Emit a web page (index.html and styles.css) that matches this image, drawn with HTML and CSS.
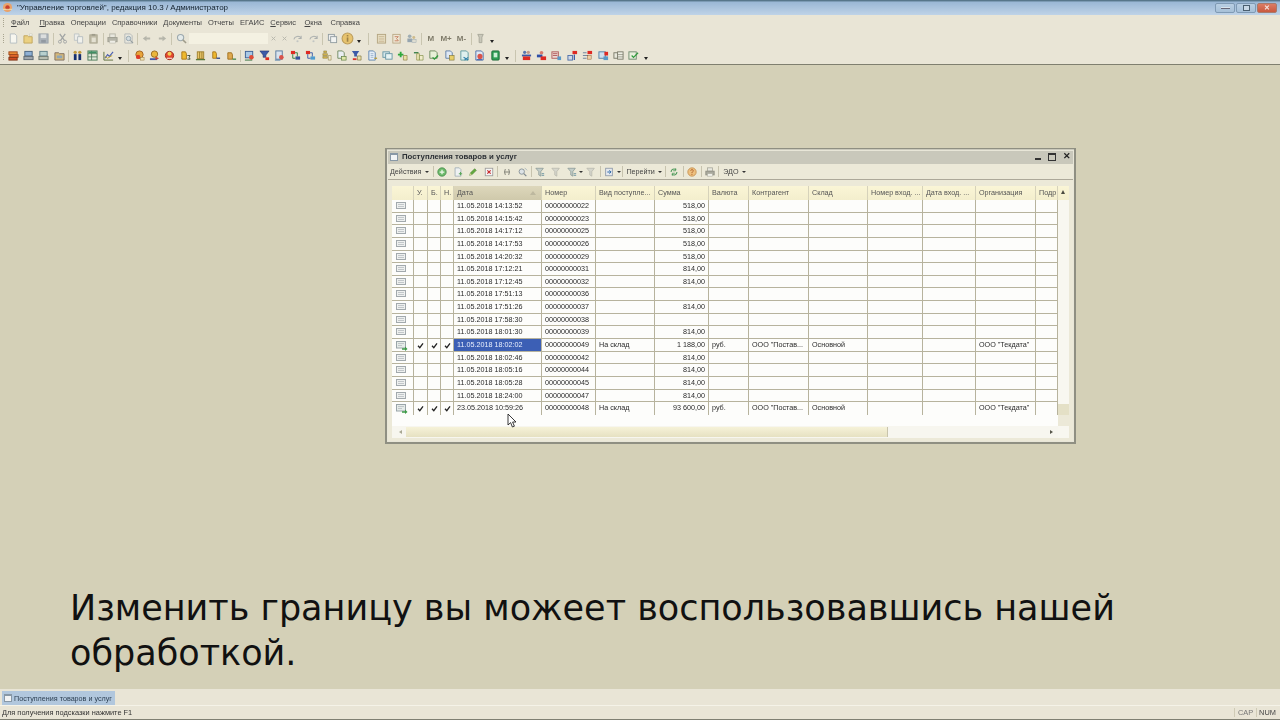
FILE: index.html
```html
<!DOCTYPE html>
<html lang="ru">
<head>
<meta charset="utf-8">
<title>Управление торговлей</title>
<link rel="stylesheet" href="styles.css">
</head>
<body>
<svg class="defs" width="0" height="0">
  <symbol id="doc" viewBox="0 0 12 12"><path d="M2.5 1h5l2 2v8h-7z" fill="#fbfbf6" stroke="#a9b4bd"/></symbol>
  <symbol id="open" viewBox="0 0 12 12"><path d="M1 3h4l1 1h4v7H1z" fill="#eccb6c" stroke="#b8963e"/><path d="M7 1h3v2H7z" fill="#fff" stroke="#b9b9a8" stroke-width=".6"/></symbol>
  <symbol id="save" viewBox="0 0 12 12"><rect x="1" y="1" width="10" height="10" fill="#9fa9b4" stroke="#8a93a0"/><rect x="3" y="1.5" width="6" height="4" fill="#d9dde0"/><rect x="3.5" y="7.5" width="5" height="3" fill="#7d8794"/></symbol>
  <symbol id="cut" viewBox="0 0 12 12"><path d="M3 1l5 7M9 1L4 8" stroke="#8f9498" stroke-width="1.4" fill="none"/><circle cx="3.2" cy="9.5" r="1.6" fill="none" stroke="#8f9498"/><circle cx="8.8" cy="9.5" r="1.6" fill="none" stroke="#8f9498"/></symbol>
  <symbol id="copy" viewBox="0 0 12 12"><path d="M1.5 1h5v7h-5z" fill="#eef0ee" stroke="#b4bcc2"/><path d="M5 4h5.500v7H5z" fill="#f4f5f2" stroke="#a8b2bb"/></symbol>
  <symbol id="paste" viewBox="0 0 12 12"><rect x="2" y="2" width="8" height="9" fill="#b5b09a" stroke="#99957f"/><rect x="4" y="1" width="4" height="2" fill="#8d8a78"/><rect x="4" y="5" width="4.500" height="5" fill="#e3e1d2"/></symbol>
  <symbol id="print" viewBox="0 0 12 12"><rect x="3" y="1" width="6" height="4" fill="#e8e8e0" stroke="#a9a99c"/><rect x="1" y="5" width="10" height="4.500" fill="#a9a99e" stroke="#8d8d80"/><rect x="3" y="8" width="6" height="3" fill="#f0f0ea" stroke="#a9a99c" stroke-width=".6"/></symbol>
  <symbol id="prev" viewBox="0 0 12 12"><path d="M2 1h6l2 2v8H2z" fill="#e8e8e0" stroke="#a7adb0"/><circle cx="6" cy="6" r="2.400" fill="#cfdbe2" stroke="#7f95a5"/><path d="M8 8l3 3" stroke="#7f8a90" stroke-width="1.200"/></symbol>
  <symbol id="undo" viewBox="0 0 12 12"><path d="M2 6l4-3v2h4v2H6v2z" fill="#a9aaa0"/></symbol>
  <symbol id="redo" viewBox="0 0 12 12"><path d="M10 6L6 3v2H2v2h4v2z" fill="#a9aaa0"/></symbol>
  <symbol id="find" viewBox="0 0 12 12"><circle cx="5" cy="5" r="3.400" fill="#e3ecef" stroke="#8b9ba5" stroke-width="1.200"/><path d="M7.500 7.500l3.500 3.500" stroke="#8d8a78" stroke-width="1.600"/></symbol>
  <symbol id="x" viewBox="0 0 12 12"><path d="M3.500 3.500l5 5M8.500 3.500l-5 5" stroke="#a9aaa0" stroke-width="1.200"/></symbol>
  <symbol id="rot" viewBox="0 0 12 12"><path d="M2 7a4.500 4.500 0 0 1 8-1.500M10 3v3H7" fill="none" stroke="#9da3a5" stroke-width="1.100"/><circle cx="6" cy="9" r="1.200" fill="#b9bebf"/></symbol>
  <symbol id="win" viewBox="0 0 12 12"><rect x="1.500" y="1.500" width="6.500" height="6.500" fill="#eef1f3" stroke="#7c8a94"/><rect x="4" y="4" width="6.500" height="6.500" fill="#f5f7f8" stroke="#7c8a94"/></symbol>
  <symbol id="info" viewBox="0 0 12 12"><circle cx="6" cy="6" r="5" fill="#e7bb55" stroke="#b28c3d"/><rect x="5.300" y="5" width="1.500" height="4" fill="#8d6b24"/><rect x="5.300" y="2.800" width="1.500" height="1.300" fill="#8d6b24"/></symbol>
  <symbol id="cal" viewBox="0 0 12 12"><rect x="1.500" y="1.500" width="9" height="9.500" fill="#e6dcbe" stroke="#a7956c"/><path d="M3 4h6M3 6.500h6M3 9h6" stroke="#b99d72" stroke-width=".8"/></symbol>
  <symbol id="cal2" viewBox="0 0 12 12"><rect x="2" y="1.500" width="8" height="9.500" fill="#efe6d4" stroke="#b09b74"/><path d="M4 4h4l-2 2 2 2.500H4" fill="none" stroke="#bf6a45"/></symbol>
  <symbol id="users" viewBox="0 0 12 12"><circle cx="4" cy="3.500" r="2" fill="#8ea0ab"/><rect x="1.500" y="6" width="5" height="4" fill="#8195a6"/><circle cx="8.500" cy="5" r="1.600" fill="#c9b179"/><rect x="6.500" y="7" width="4.500" height="3.500" fill="#dcdcd0" stroke="#8195a6" stroke-width=".5"/></symbol>
  <symbol id="fig" viewBox="0 0 12 12"><path d="M3 1.500h6L7.500 4.500v6h-3v-6z" fill="#c2c1b4" stroke="#97978a"/></symbol>
  <symbol id="book" viewBox="0 0 12 12"><rect x="1" y="2" width="9" height="3" fill="#e98a35" stroke="#a0481c"/><rect x="2" y="5" width="9" height="3" fill="#e4672c" stroke="#a0481c"/><rect x="1" y="8" width="9" height="3" fill="#cf4d24" stroke="#7f3315"/></symbol>
  <symbol id="pc" viewBox="0 0 12 12"><rect x="2" y="1.500" width="8" height="5" fill="#8fb0d4" stroke="#47637f"/><rect x="1" y="7" width="10" height="3.500" fill="#9ea6ac" stroke="#5e6a74"/></symbol>
  <symbol id="pcg" viewBox="0 0 12 12"><rect x="2" y="1.500" width="8" height="5" fill="#b7d0ce" stroke="#5f7f88"/><rect x="1" y="7" width="10" height="3.500" fill="#b7bdb0" stroke="#707a70"/></symbol>
  <symbol id="box" viewBox="0 0 12 12"><path d="M1 3h4l1 1h5v7H1z" fill="#d6b878" stroke="#7f7060"/><rect x="3" y="6" width="6" height="3" fill="#8fa6b6"/></symbol>
  <symbol id="ppl" viewBox="0 0 12 12"><circle cx="3.500" cy="2.500" r="1.800" fill="#c29a3e"/><rect x="2" y="4.500" width="3" height="6.500" fill="#17306f"/><circle cx="8.500" cy="2.500" r="1.800" fill="#c29a3e"/><rect x="7" y="4.500" width="3" height="6.500" fill="#17306f"/></symbol>
  <symbol id="tbl" viewBox="0 0 12 12"><rect x="1" y="1" width="10" height="10" fill="#dfe9d8" stroke="#4d7a5a"/><path d="M1 4h10M5 1v10M1 7.500h10" stroke="#4d7a5a" stroke-width=".9"/><rect x="1.500" y="1.500" width="9" height="2" fill="#3f8f63"/></symbol>
  <symbol id="chart" viewBox="0 0 12 12"><path d="M1 11h10M1 11V2" stroke="#5b6b3a"/><path d="M2 9l3-4 2 2 4-5" stroke="#4a5fb0" stroke-width="1.200" fill="none"/><path d="M2 7l3 2 5-3" stroke="#b9a02a" fill="none"/></symbol>
  <symbol id="o1" viewBox="0 0 12 12"><circle cx="6" cy="5" r="4" fill="#e8a53a" stroke="#a15f1d"/><circle cx="4.500" cy="7.500" r="2.400" fill="#dd3b2a"/><rect x="7" y="8" width="4" height="3" fill="#f0e2b0" stroke="#91702e" stroke-width=".5"/></symbol>
  <symbol id="o2" viewBox="0 0 12 12"><circle cx="6" cy="4.500" r="3.500" fill="#eab63a" stroke="#97691c"/><path d="M1 9h8v2H1z" fill="#4059a8"/><path d="M7 7l4 2-4 2z" fill="#c8402e"/></symbol>
  <symbol id="o3" viewBox="0 0 12 12"><circle cx="6" cy="6" r="4.500" fill="#e3452e" stroke="#9d2a18"/><circle cx="6" cy="4" r="2.200" fill="#f2cc55"/><path d="M3 9h6" stroke="#fff"/></symbol>
  <symbol id="o4" viewBox="0 0 12 12"><path d="M2 2h4l1 2v6H2z" fill="#eeb92f" stroke="#a8761e"/><path d="M8 6h3l-1 2 1 2H8" fill="none" stroke="#3a4a3a"/></symbol>
  <symbol id="o5" viewBox="0 0 12 12"><rect x="2.500" y="2" width="7" height="7.500" fill="#e9c76a" stroke="#9e7f2e"/><path d="M5 2v7.500M7.500 2v7.500" stroke="#9e7f2e"/><path d="M1 10.500h10" stroke="#5a7a3a" stroke-width="1.400"/></symbol>
  <symbol id="o6" viewBox="0 0 12 12"><path d="M3 2h3l1 2v5H3z" fill="#eeb92f" stroke="#a8761e"/><path d="M7 9h4" stroke="#38508c" stroke-width="1.500"/></symbol>
  <symbol id="o7" viewBox="0 0 12 12"><path d="M2 3h4l1 2v5H2z" fill="#dfa950" stroke="#a0701e"/><path d="M7 10h4" stroke="#4d8c50" stroke-width="1.500"/></symbol>
  <symbol id="d1" viewBox="0 0 12 12"><rect x="1.500" y="1.500" width="8" height="7" fill="#a9c9e6" stroke="#3a5f96"/><circle cx="8" cy="8" r="2.500" fill="#e14b36"/><path d="M1 11h8" stroke="#2f6e3a"/></symbol>
  <symbol id="d2" viewBox="0 0 12 12"><path d="M1 1h10L7.500 5.500V8H4.500V5.500z" fill="#3b5aa8" stroke="#22306a" stroke-width=".6"/><rect x="7" y="8" width="4" height="3" fill="#dd2a1e"/></symbol>
  <symbol id="d3" viewBox="0 0 12 12"><rect x="2" y="1" width="7" height="9" fill="#d9e3ee" stroke="#577aa0"/><circle cx="8" cy="8" r="2.500" fill="#d9534a"/><path d="M1 11h6" stroke="#4d7aa8"/></symbol>
  <symbol id="d4" viewBox="0 0 12 12"><rect x="1" y="1" width="4.500" height="3.500" fill="#df2a22"/><rect x="6" y="7" width="5" height="3.500" fill="#34539e"/><path d="M3 4.500V9h3M8 7V3H5.500" stroke="#2f7a3f" fill="none"/></symbol>
  <symbol id="d5" viewBox="0 0 12 12"><rect x="1" y="1" width="4.500" height="3.500" fill="#df2a22"/><rect x="6" y="7" width="5" height="3.500" fill="#4f9ccf"/><path d="M3 4.500V9h3M8 7V3H5.500" stroke="#3b5aa8" fill="none"/></symbol>
  <symbol id="d6" viewBox="0 0 12 12"><path d="M3 1h3v2H3zM2 4h5v2H2zM2 7h5v2H2z" fill="#d9b84d" stroke="#7a6a2a" stroke-width=".5"/><path d="M8 6h3v5H8z" fill="#f1e9c9" stroke="#7a6a2a" stroke-width=".5"/></symbol>
  <symbol id="d7" viewBox="0 0 12 12"><path d="M2 1h5l2 2v6H2z" fill="#e9eef2" stroke="#6f8a5f"/><rect x="6" y="7" width="5" height="4" fill="#dfe7a9" stroke="#587a3a" stroke-width=".7"/></symbol>
  <symbol id="d8" viewBox="0 0 12 12"><path d="M1 1h8L6.500 4.500V7h-3V4.500z" fill="#3d5ba8"/><path d="M7 6.500h4v4.500H7z" fill="#e9dfa5" stroke="#6a5f2a" stroke-width=".6"/><rect x="2" y="9" width="4" height="2" fill="#d9342a"/></symbol>
  <symbol id="d9" viewBox="0 0 12 12"><path d="M2 1h5l2 2v8H2z" fill="#e6eef7" stroke="#5f86b0"/><path d="M4 4h3M4 6h3M4 8h3" stroke="#7f9cbd" stroke-width=".7"/><path d="M8 9h3" stroke="#b59a3a" stroke-width="1.400"/></symbol>
  <symbol id="d10" viewBox="0 0 12 12"><rect x="1" y="2" width="7" height="6" fill="#d5e8ea" stroke="#6796a5"/><rect x="4" y="4" width="7" height="6" fill="#e7f3f2" stroke="#6796a5"/></symbol>
  <symbol id="d11" viewBox="0 0 12 12"><path d="M1 4h2V2h2v2h2v2H5v2H3V6H1z" fill="#2fa83b"/><path d="M7 6h4v5H7z" fill="#e9e0a5" stroke="#7a6a2a" stroke-width=".6"/></symbol>
  <symbol id="d12" viewBox="0 0 12 12"><path d="M1 3h5" stroke="#2f7a3f" stroke-width="1.400"/><path d="M4 4h3v7H4z" fill="#eee7b8" stroke="#7a7a2a" stroke-width=".6"/><path d="M7 6h4v5H7z" fill="#f1eccb" stroke="#6a7a2a" stroke-width=".6"/></symbol>
  <symbol id="d13" viewBox="0 0 12 12"><path d="M2 1h6l2 2v6H2z" fill="#e8f0d8" stroke="#6f8a5f"/><path d="M5 8l2 2 4-4" stroke="#2f9a3c" stroke-width="1.400" fill="none"/></symbol>
  <symbol id="d14" viewBox="0 0 12 12"><path d="M2 1h5l2 2v6H2z" fill="#dfe8f4" stroke="#5f7fa8"/><rect x="6" y="6" width="5" height="5" fill="#e8cf6a" stroke="#7a6a2a" stroke-width=".6"/></symbol>
  <symbol id="d15" viewBox="0 0 12 12"><path d="M2 1h6l2 2v8H2z" fill="#dff0ee" stroke="#5f9aa0"/><path d="M5 8l5 3M10 8l-4 3" stroke="#2f7fa8" stroke-width="1.200"/></symbol>
  <symbol id="d16" viewBox="0 0 12 12"><path d="M2 1h6l2 2v8H2z" fill="#dfe8f4" stroke="#4f6fa8"/><circle cx="6.500" cy="7" r="2.800" fill="#d9534a"/><path d="M3 10.500h6" stroke="#3a5aa8"/></symbol>
  <symbol id="d17" viewBox="0 0 12 12"><rect x="2" y="1" width="8" height="10" rx="1" fill="#2f9f55" stroke="#1e6a3a"/><rect x="4" y="3" width="4" height="5" fill="#cdeed6"/></symbol>
  <symbol id="e1" viewBox="0 0 12 12"><circle cx="4" cy="2.500" r="1.800" fill="#5a78b0"/><circle cx="8" cy="2.500" r="1.800" fill="#c29a8a"/><rect x="1" y="5" width="10" height="2" fill="#3a5aa8"/><rect x="2" y="7" width="8" height="4" fill="#df2a22"/></symbol>
  <symbol id="e2" viewBox="0 0 12 12"><circle cx="6" cy="3" r="2" fill="#d97a6a"/><rect x="1" y="5" width="6" height="3" fill="#2f4fa8"/><rect x="5" y="7" width="6" height="4" fill="#df2a22"/></symbol>
  <symbol id="e3" viewBox="0 0 12 12"><rect x="1" y="2" width="7" height="7" fill="#eed9d4" stroke="#b05a5a"/><path d="M2 4h5M2 6h5" stroke="#b05a5a"/><rect x="7" y="7" width="4" height="4" fill="#5a9ac8"/></symbol>
  <symbol id="e4" viewBox="0 0 12 12"><rect x="6" y="1" width="5" height="3.500" fill="#df2a22"/><rect x="1" y="6" width="5" height="5" fill="#cfd8e6" stroke="#4f6fa8"/><path d="M8 5v6" stroke="#3a5aa8" stroke-width="1.400"/></symbol>
  <symbol id="e5" viewBox="0 0 12 12"><rect x="6" y="1" width="5" height="3.500" fill="#df2a22"/><path d="M1 3h4M1 6h6M1 9h4" stroke="#6a7f9a"/><rect x="6" y="6" width="4" height="4" fill="#f0cfa5" stroke="#8a5a2a" stroke-width=".5"/></symbol>
  <symbol id="e6" viewBox="0 0 12 12"><rect x="1" y="2" width="7" height="7" fill="#cfe0ee" stroke="#4f7fa8"/><rect x="7" y="2" width="4" height="4" fill="#df2a22"/><rect x="6" y="7" width="5" height="4" fill="#5a9ac8"/></symbol>
  <symbol id="e7" viewBox="0 0 12 12"><rect x="1" y="3" width="6" height="6" fill="#e8e8dc" stroke="#7a7a6a"/><rect x="5" y="2" width="6" height="8" fill="#efefe4" stroke="#7a7a6a"/><path d="M5 5h6M5 7.500h6" stroke="#7a7a6a" stroke-width=".7"/></symbol>
  <symbol id="e8" viewBox="0 0 12 12"><rect x="1" y="2" width="8" height="8" fill="#e8efdc" stroke="#6f8a6f"/><path d="M4 6l2 2 5-5" stroke="#2f9a3c" stroke-width="1.300" fill="none"/></symbol>
  <symbol id="gplus" viewBox="0 0 12 12"><circle cx="6" cy="6" r="5" fill="#6dbb6a" stroke="#468c4b"/><path d="M6 3.200v5.600M3.200 6h5.600" stroke="#eef7ea" stroke-width="1.500"/></symbol>
  <symbol id="dadd" viewBox="0 0 12 12"><path d="M2.500 1h5l2 2v8h-7z" fill="#eef1f2" stroke="#9fadb5"/><path d="M7 8h4M9 6v4" stroke="#5aa65a" stroke-width="1.300"/></symbol>
  <symbol id="pen" viewBox="0 0 12 12"><path d="M2 10l1-3 5-5 2 2-5 5z" fill="#63a93f" stroke="#467a2e" stroke-width=".6"/><path d="M2 10l1-2.500 1.500 1.500z" fill="#e6d6a0"/></symbol>
  <symbol id="del" viewBox="0 0 12 12"><rect x="1.500" y="1.500" width="9" height="9" fill="#f5f5f5" stroke="#9a9a9a"/><path d="M4 4l4 4M8 4l-4 4" stroke="#c8282a" stroke-width="1.400"/></symbol>
  <symbol id="arrows" viewBox="0 0 12 12"><path d="M4 2.500Q2 6 4 9.500M8 2.500q2 3.500 0 7" fill="none" stroke="#6d6f66"/><path d="M3.500 6h5" stroke="#6d6f66"/></symbol>
  <symbol id="srch" viewBox="0 0 12 12"><circle cx="4.500" cy="5.500" r="3.200" fill="#dde3e6" stroke="#7f8a90"/><path d="M7 8l3 3" stroke="#7f8a90" stroke-width="1.500"/><path d="M8 1l3 3" stroke="#a6b4bc"/></symbol>
  <symbol id="fn" viewBox="0 0 12 12"><path d="M1 1.500h9L7 5.500V11L4.500 9.500v-4z" fill="#c3cdc9" stroke="#7f8f8c" stroke-width=".8"/><path d="M8 8h3M8 10h3" stroke="#5e8a9a"/></symbol>
  <symbol id="fnd" viewBox="0 0 12 12"><path d="M1 1.500h9L7 5.500V11L4.500 9.500v-4z" fill="#d6d6cc" stroke="#b2b2a8" stroke-width=".8"/></symbol>
  <symbol id="goto" viewBox="0 0 12 12"><rect x="2" y="1.500" width="8" height="9" fill="#e5e9ef" stroke="#8a96a6"/><path d="M4 6h4M6.500 4l2 2-2 2" stroke="#2f6aa8" fill="none" stroke-width="1.200"/></symbol>
  <symbol id="ref" viewBox="0 0 12 12"><path d="M2.500 6a3.500 3.500 0 0 1 6-2.500M9.500 6a3.500 3.500 0 0 1-6 2.500" fill="none" stroke="#4f9a5c" stroke-width="1.300"/><path d="M8 1.500v3h-3M4 10.500v-3h3" fill="none" stroke="#4f9a5c"/></symbol>
  <symbol id="help" viewBox="0 0 12 12"><circle cx="6" cy="6" r="5" fill="#edc07f" stroke="#c58f4f"/><path d="M4.500 4.500a1.500 1.500 0 1 1 2 1.500q-.6.300-.6 1.200" fill="none" stroke="#b0602c" stroke-width="1.100"/><rect x="5.300" y="8.200" width="1.200" height="1.200" fill="#b0602c"/></symbol>
  <symbol id="rowdoc" viewBox="0 0 11 8"><rect x=".5" y=".5" width="9" height="6" fill="#eef0ef" stroke="#a2a9ad"/><path d="M2 2.500h6M2 4.500h6" stroke="#b6bcc0" stroke-width=".8"/></symbol>
  <symbol id="rowok" viewBox="0 0 12 10"><rect x=".5" y=".5" width="9" height="6.500" fill="#e6ece9" stroke="#9aa5a9"/><path d="M2 2.500h6M2 4.500h4" stroke="#b6bcc0" stroke-width=".8"/><path d="M6 8h4" stroke="#3c9a47" stroke-width="1.500"/><path d="M9 5.500L11.500 8 9 10z" fill="#3c9a47"/></symbol>
  <symbol id="chk" viewBox="0 0 7 7"><path d="M1 3.800l1.800 1.900L6 1.400" fill="none" stroke="#222" stroke-width="1.300"/></symbol>
</svg>

<header class="titlebar">
  <svg class="appicon" viewBox="0 0 12 12"><circle cx="6" cy="6" r="5" fill="#e9a36a"/><circle cx="6" cy="6" r="2.400" fill="#c8402e"/><path d="M1 8h10" stroke="#f2e0b0"/></svg>
  <span class="titletext">"Управление торговлей", редакция 10.3 / Администратор</span>
  <div class="wctl">
    <span class="wbtn"><span class="wmin"></span></span>
    <span class="wbtn"><span class="wres"></span></span>
    <span class="wbtn wclose">✕</span>
  </div>
</header>

<nav class="menubar">
  <span class="grip"></span>
  <span class="mi"><u>Ф</u>айл</span><span class="mi"><u>П</u>равка</span><span class="mi">Операции</span><span class="mi">Справочники</span><span class="mi">Документы</span><span class="mi">Отчеты</span><span class="mi">ЕГАИС</span><span class="mi"><u>С</u>ервис</span><span class="mi"><u>О</u>кна</span><span class="mi">Справка</span>
</nav>

<div class="tb tb1">
  <span class="grip"></span>
  <svg class="ic"><use href="#doc"/></svg><svg class="ic"><use href="#open"/></svg><svg class="ic"><use href="#save"/></svg><span class="sep"></span>
  <svg class="ic"><use href="#cut"/></svg><svg class="ic"><use href="#copy"/></svg><svg class="ic"><use href="#paste"/></svg><span class="sep"></span>
  <svg class="ic"><use href="#print"/></svg><svg class="ic"><use href="#prev"/></svg><span class="sep"></span>
  <svg class="ic"><use href="#undo"/></svg><svg class="ic"><use href="#redo"/></svg><span class="sep"></span>
  <svg class="ic"><use href="#find"/></svg>
  <span class="findbox"></span><svg class="ic narrow"><use href="#x"/></svg><svg class="ic narrow"><use href="#x"/></svg><svg class="ic"><use href="#rot"/></svg><svg class="ic"><use href="#rot"/></svg><span class="sep"></span>
  <svg class="ic"><use href="#win"/></svg><svg class="ic big"><use href="#info"/></svg><span class="drop"></span><span class="sep wide"></span>
  <svg class="ic"><use href="#cal"/></svg><svg class="ic"><use href="#cal2"/></svg><svg class="ic"><use href="#users"/></svg><span class="sep"></span>
  <span class="mem">М</span><span class="mem">М+</span><span class="mem">М-</span><span class="sep"></span>
  <svg class="ic"><use href="#fig"/></svg><span class="drop"></span>
</div>

<div class="tb tb2">
  <span class="grip"></span>
  <svg class="ic"><use href="#book"/></svg><svg class="ic"><use href="#pc"/></svg><svg class="ic"><use href="#pcg"/></svg><svg class="ic"><use href="#box"/></svg><span class="sep"></span>
  <svg class="ic"><use href="#ppl"/></svg><svg class="ic"><use href="#tbl"/></svg><svg class="ic"><use href="#chart"/></svg><span class="drop"></span><span class="sep wide"></span>
  <svg class="ic"><use href="#o1"/></svg><svg class="ic"><use href="#o2"/></svg><svg class="ic"><use href="#o3"/></svg><svg class="ic"><use href="#o4"/></svg><svg class="ic"><use href="#o5"/></svg><svg class="ic"><use href="#o6"/></svg><svg class="ic"><use href="#o7"/></svg><span class="sep"></span>
  <svg class="ic"><use href="#d1"/></svg><svg class="ic"><use href="#d2"/></svg><svg class="ic"><use href="#d3"/></svg><svg class="ic"><use href="#d4"/></svg><svg class="ic"><use href="#d5"/></svg><svg class="ic"><use href="#d6"/></svg><svg class="ic"><use href="#d7"/></svg><svg class="ic"><use href="#d8"/></svg><svg class="ic"><use href="#d9"/></svg><svg class="ic"><use href="#d10"/></svg><svg class="ic"><use href="#d11"/></svg><svg class="ic"><use href="#d12"/></svg><svg class="ic"><use href="#d13"/></svg><svg class="ic"><use href="#d14"/></svg><svg class="ic"><use href="#d15"/></svg><svg class="ic"><use href="#d16"/></svg><svg class="ic"><use href="#d17"/></svg><span class="drop"></span><span class="sep wide"></span>
  <svg class="ic"><use href="#e1"/></svg><svg class="ic"><use href="#e2"/></svg><svg class="ic"><use href="#e3"/></svg><svg class="ic"><use href="#e4"/></svg><svg class="ic"><use href="#e5"/></svg><svg class="ic"><use href="#e6"/></svg><svg class="ic"><use href="#e7"/></svg><svg class="ic"><use href="#e8"/></svg><span class="drop"></span>
</div>

<main class="desktop">
  <section class="window">
    <div class="wintitle">
      <span class="wintitleicon"></span>
      <span class="wintitletext">Поступления товаров и услуг</span>
      <span class="winctl"><span class="cmin"></span><span class="cmax"></span><span class="cx">✕</span></span>
    </div>
    <div class="wintools">
      <span class="wt wt-act">Действия<span class="mini"></span></span><span class="wsep"></span>
      <svg class="wi"><use href="#gplus"/></svg><svg class="wi"><use href="#dadd"/></svg><svg class="wi"><use href="#pen"/></svg><svg class="wi"><use href="#del"/></svg><span class="wsep"></span>
      <svg class="wi"><use href="#arrows"/></svg><svg class="wi"><use href="#srch"/></svg><span class="wsep"></span>
      <svg class="wi"><use href="#fn"/></svg><svg class="wi"><use href="#fnd"/></svg><svg class="wi"><use href="#fn"/></svg><span class="mini"></span><svg class="wi"><use href="#fnd"/></svg><span class="wsep"></span>
      <svg class="wi"><use href="#goto"/></svg><span class="mini"></span><span class="wsep"></span>
      <span class="wt">Перейти<span class="mini"></span></span><span class="wsep"></span>
      <svg class="wi"><use href="#ref"/></svg><span class="wsep"></span>
      <svg class="wi"><use href="#help"/></svg><span class="wsep"></span>
      <svg class="wi"><use href="#print"/></svg><span class="wsep"></span>
      <span class="wt">ЭДО<span class="mini"></span></span>
    </div>
    <div class="gridwrap">
      <div class="gridmain">
        <div class="row head">
          <i></i><i>У.</i><i>Б.</i><i>Н.</i><i class="sorted">Дата<span class="sortmark"></span></i><i>Номер</i><i>Вид поступле...</i><i>Сумма</i><i>Валюта</i><i>Контрагент</i><i>Склад</i><i>Номер вход. ...</i><i>Дата вход. ...</i><i>Организация</i><i>Подр</i>
        </div>
        <div class="row"><i class="ri"><svg class="rd"><use href="#rowdoc"/></svg></i><i></i><i></i><i></i><i>11.05.2018 14:13:52</i><i>00000000022</i><i></i><i class="num">518,00</i><i></i><i></i><i></i><i></i><i></i><i></i><i></i></div>
        <div class="row"><i class="ri"><svg class="rd"><use href="#rowdoc"/></svg></i><i></i><i></i><i></i><i>11.05.2018 14:15:42</i><i>00000000023</i><i></i><i class="num">518,00</i><i></i><i></i><i></i><i></i><i></i><i></i><i></i></div>
        <div class="row"><i class="ri"><svg class="rd"><use href="#rowdoc"/></svg></i><i></i><i></i><i></i><i>11.05.2018 14:17:12</i><i>00000000025</i><i></i><i class="num">518,00</i><i></i><i></i><i></i><i></i><i></i><i></i><i></i></div>
        <div class="row"><i class="ri"><svg class="rd"><use href="#rowdoc"/></svg></i><i></i><i></i><i></i><i>11.05.2018 14:17:53</i><i>00000000026</i><i></i><i class="num">518,00</i><i></i><i></i><i></i><i></i><i></i><i></i><i></i></div>
        <div class="row"><i class="ri"><svg class="rd"><use href="#rowdoc"/></svg></i><i></i><i></i><i></i><i>11.05.2018 14:20:32</i><i>00000000029</i><i></i><i class="num">518,00</i><i></i><i></i><i></i><i></i><i></i><i></i><i></i></div>
        <div class="row"><i class="ri"><svg class="rd"><use href="#rowdoc"/></svg></i><i></i><i></i><i></i><i>11.05.2018 17:12:21</i><i>00000000031</i><i></i><i class="num">814,00</i><i></i><i></i><i></i><i></i><i></i><i></i><i></i></div>
        <div class="row"><i class="ri"><svg class="rd"><use href="#rowdoc"/></svg></i><i></i><i></i><i></i><i>11.05.2018 17:12:45</i><i>00000000032</i><i></i><i class="num">814,00</i><i></i><i></i><i></i><i></i><i></i><i></i><i></i></div>
        <div class="row"><i class="ri"><svg class="rd"><use href="#rowdoc"/></svg></i><i></i><i></i><i></i><i>11.05.2018 17:51:13</i><i>00000000036</i><i></i><i class="num"></i><i></i><i></i><i></i><i></i><i></i><i></i><i></i></div>
        <div class="row"><i class="ri"><svg class="rd"><use href="#rowdoc"/></svg></i><i></i><i></i><i></i><i>11.05.2018 17:51:26</i><i>00000000037</i><i></i><i class="num">814,00</i><i></i><i></i><i></i><i></i><i></i><i></i><i></i></div>
        <div class="row"><i class="ri"><svg class="rd"><use href="#rowdoc"/></svg></i><i></i><i></i><i></i><i>11.05.2018 17:58:30</i><i>00000000038</i><i></i><i class="num"></i><i></i><i></i><i></i><i></i><i></i><i></i><i></i></div>
        <div class="row"><i class="ri"><svg class="rd"><use href="#rowdoc"/></svg></i><i></i><i></i><i></i><i>11.05.2018 18:01:30</i><i>00000000039</i><i></i><i class="num">814,00</i><i></i><i></i><i></i><i></i><i></i><i></i><i></i></div>
        <div class="row"><i class="ri"><svg class="rk"><use href="#rowok"/></svg></i><i class="ck"><svg class="cksvg"><use href="#chk"/></svg></i><i class="ck"><svg class="cksvg"><use href="#chk"/></svg></i><i class="ck"><svg class="cksvg"><use href="#chk"/></svg></i><i class="sel">11.05.2018 18:02:02</i><i>00000000049</i><i>На склад</i><i class="num">1 188,00</i><i>руб.</i><i>ООО "Постав...</i><i>Основной</i><i></i><i></i><i>ООО "Текдата"</i><i></i></div>
        <div class="row"><i class="ri"><svg class="rd"><use href="#rowdoc"/></svg></i><i></i><i></i><i></i><i>11.05.2018 18:02:46</i><i>00000000042</i><i></i><i class="num">814,00</i><i></i><i></i><i></i><i></i><i></i><i></i><i></i></div>
        <div class="row"><i class="ri"><svg class="rd"><use href="#rowdoc"/></svg></i><i></i><i></i><i></i><i>11.05.2018 18:05:16</i><i>00000000044</i><i></i><i class="num">814,00</i><i></i><i></i><i></i><i></i><i></i><i></i><i></i></div>
        <div class="row"><i class="ri"><svg class="rd"><use href="#rowdoc"/></svg></i><i></i><i></i><i></i><i>11.05.2018 18:05:28</i><i>00000000045</i><i></i><i class="num">814,00</i><i></i><i></i><i></i><i></i><i></i><i></i><i></i></div>
        <div class="row"><i class="ri"><svg class="rd"><use href="#rowdoc"/></svg></i><i></i><i></i><i></i><i>11.05.2018 18:24:00</i><i>00000000047</i><i></i><i class="num">814,00</i><i></i><i></i><i></i><i></i><i></i><i></i><i></i></div>
        <div class="row last"><i class="ri"><svg class="rk"><use href="#rowok"/></svg></i><i class="ck"><svg class="cksvg"><use href="#chk"/></svg></i><i class="ck"><svg class="cksvg"><use href="#chk"/></svg></i><i class="ck"><svg class="cksvg"><use href="#chk"/></svg></i><i>23.05.2018 10:59:26</i><i>00000000048</i><i>На склад</i><i class="num">93 600,00</i><i>руб.</i><i>ООО "Постав...</i><i>Основной</i><i></i><i></i><i>ООО "Текдата"</i><i></i></div>
        <div class="hscroll"><span class="hleft"></span><span class="hthumb"></span><span class="hright"></span></div>
      </div>
      <div class="vscroll"><span class="vhead"></span><span class="vgap"></span><span class="vthumb"></span><span class="vdown"></span></div>
    </div>
  </section>
  <svg class="cursor" viewBox="0 0 10 15"><path d="M1 1v11l2.600-2.400L5.400 14l2-.8-1.800-4.200H9z" fill="#fff" stroke="#222" stroke-width=".9"/></svg>
  <p class="caption">Изменить границу вы можеет воспользовавшись нашей обработкой.</p>
</main>

<div class="taskbar"><span class="task"><span class="wintitleicon"></span>Поступления товаров и услуг</span></div>
<footer class="statusbar"><span class="hint">Для получения подсказки нажмите F1</span><span class="ind">CAP</span><span class="ind">NUM</span></footer>
</body>
</html>
```
FILE: styles.css
```css
* { box-sizing: border-box; }
html, body { margin: 0; height: 100%; }
body {
  width: 1280px; height: 720px; overflow: hidden;
  display: flex; flex-direction: column;
  font-family: "Liberation Sans", Arial, sans-serif;
  font-size: 8px; color: #333;
  background: #d4d0b7;
}
.defs { position: absolute; }
i { font-style: normal; }
.titlebar, .menubar, .tb, .window, .taskbar, .statusbar { filter: blur(.3px); }

.titlebar {
  height: 15px; flex: none; display: flex; align-items: center; padding: 0 2px;
  background: linear-gradient(#4f6d80 0, #5f7f95 1px, #9ab7d5 2px, #bfd3e8 100%);
}
.appicon { width: 11px; height: 11px; margin-right: 4px; }
.titletext { font-size: 8px; color: #12202c; flex: 1; }
.wctl { display: flex; gap: 1px; padding-right: 1px; }
.wbtn {
  width: 20px; height: 10px; border: 1px solid #7f9ab4; border-radius: 2px;
  background: linear-gradient(#b9cfe3, #a6c0d8); display: flex; align-items: center; justify-content: center;
  font-size: 7px; color: #f4e4e0;
}
.wmin { width: 9px; height: 2px; background: #d8e3ec; border: 0 solid #667; border-bottom-width: 1px; }
.wres { width: 7px; height: 6px; border: 1px solid #4a5f70; background: #c8d8e6; }
.wclose { background: linear-gradient(#db7c64, #c9583e); border-color: #a87a6c; font-weight: bold; }

.menubar, .tb { flex: none; display: flex; align-items: center; background: #e9e5d6; }
.menubar { height: 15px; padding-left: 3px; gap: 0; }
.grip { width: 1px; height: 9px; margin-right: 1.5px; border-left: 1px dotted #a8a48f; flex: none; }
.menubar .grip { margin-right: 5px; }
.mi { font-size: 7.5px; color: #444; margin-right: 6px; white-space: nowrap; }
.grip + .mi { margin-left: 2px; margin-right: 10px; }
.mi:nth-last-child(-n+3) { margin-right: 8.5px; }
.tb { height: 17px; padding-left: 3px; }
.tb2 { height: 18px; border-bottom: 1px solid #7f7f6f; }
.ic { width: 11px; height: 11px; flex: none; margin: 0 2.2px; }
.tb1 .ic { opacity: .8; }
.ic.narrow { margin: 0 1px; width: 9px; }
.ic.big { width: 13px; height: 13px; margin: 0 1px; }
.sep { width: 1px; height: 12px; background: #c9c5b0; flex: none; }
.tb1 .sep { margin: 0 1.3px; }
.tb2 .sep { margin: 0 .8px; }
.tb1 .sep.wide { margin: 0 4.3px; }
.tb2 .sep.wide { margin: 0 2.8px; }
.findbox { width: 79px; height: 11px; background: #f4f1e2; flex: none; }
.drop { width: 0; height: 0; margin: 6px 3px 0 2px; border: 2.5px solid transparent; border-top: 3px solid #222; border-bottom: 0; flex: none; }
.mem { font-size: 8px; font-weight: 700; color: #7f7b6a; width: 15.4px; text-align: center; flex: none; }

.desktop { flex: 1; position: relative; background: #d4d0b7; }
.window {
  position: absolute; left: 385px; top: 83px; width: 691px; height: 296px;
  display: flex; flex-direction: column;
  background: #ece9d8; border: 2px solid #8f8f82; border-top-width: 1px; outline: 1px solid #e8e6d8; outline-offset: -3px;
}
.wintitle {
  height: 15px; flex: none; display: flex; align-items: center; padding: 0 3px;
  background: #c9c8bb;
}
.wintitleicon { width: 8px; height: 8px; background: #f2f4f5; border: 1px solid #8898a6; border-top-width: 2px; margin-right: 4px; flex: none; }
.wintitletext { flex: 1; font-size: 7.8px; font-weight: 700; color: #2c3035; }
.winctl { display: flex; align-items: center; gap: 7px; }
.cmin { width: 6px; height: 2px; background: #333; margin-top: 5px; }
.cmax { width: 8px; height: 8px; border: 1px solid #333; border-top-width: 2px; }
.cx { font-size: 9px; font-weight: 700; color: #222; line-height: 9px; }
.wintools { height: 16px; flex: none; display: flex; align-items: center; padding-left: 3px; font-size: 7.2px; color: #444; border-bottom: 1px solid #aca899; }
.wt { display: flex; align-items: center; white-space: nowrap; padding: 0 2px 0 3px; flex: none; }
.wt-act { width: 42px; padding: 0; }
.mini { width: 0; height: 0; margin-left: 0; border: 2px solid transparent; border-top: 2.5px solid #333; border-bottom: 0; flex: none; }
.wt .mini { margin-left: 3px; }
.wi { width: 10px; height: 10px; margin: 0 2.8px; flex: none; }
.wsep { width: 1px; height: 11px; background: #c7c3ae; margin: 0 .7px; flex: none; }

.gridwrap { margin: 6px 5px 4px 5px; flex: 1; display: flex; background: #fdfdfb; min-height: 0; position: relative; }
.gridmain { width: 666px; display: flex; flex-direction: column; position: relative; height: 100%; }
.row {
  display: grid; height: 12.65px; flex: none;
  grid-template-columns: 22px 14px 13px 13px 88px 54px 59px 54px 40px 60px 59px 55px 53px 60px 22px;
  font-size: 7.2px; color: #2a2a2a; line-height: 12px;
}
.row > i { display: block; border-right: 1px solid #b7b39d; border-bottom: 1px solid #b7b39d; padding-left: 3px; white-space: nowrap; overflow: hidden; min-width: 0; }
.row.last > i { border-bottom: 0; }
.row > i.num { text-align: right; padding: 0 3px 0 0; }
.row > i.ri { padding: 2px 0 0 4px; line-height: 0; }
.row > i.ck { padding: 3px 0 0 3px; line-height: 0; }
.rd { width: 11px; height: 8px; }
.rk { width: 12px; height: 10px; }
.cksvg { width: 7px; height: 7px; }
.row > i.sel { background: #3c5fb5; color: #e8eefc; }
.row.head { height: 14px; background: linear-gradient(#faf5d6, #f3eecd); line-height: 13px; font-size: 7.2px; color: #555; }
.row.head > i { border-right: 1px solid #d6d2ba; border-bottom: 0; }
.row.head > i.sorted { background: linear-gradient(#ddd7bb, #cfc9ab); position: relative; }
.sortmark { position: absolute; right: 5px; top: 5px; border: 3px solid transparent; border-bottom: 4px solid #bdb89f; border-top: 0; }
.hscroll {
  position: absolute; left: 0; right: 0; bottom: 0; height: 12px; display: flex; align-items: center;
  background: #f7f6ef;
}
.hleft { margin: 0 4px 0 7px; border: 2.5px solid transparent; border-right: 3px solid #a8a793; border-left: 0; }
.hthumb { width: 482px; height: 10px; background: linear-gradient(#f6f2d8, #e6e1c2); border-right: 1px solid #c8c4ac; }
.hright { margin-left: auto; margin-right: 5px; border: 2.5px solid transparent; border-left: 3.5px solid #55554a; border-right: 0; }
.vscroll { width: 11px; display: flex; flex-direction: column; background: #f8f7f0; }
.vhead { height: 14px; background: linear-gradient(#faf5d6, #f3eecd); position: relative; }
.vhead::after { content: ""; position: absolute; left: 3px; top: 4px; border: 2.5px solid transparent; border-bottom: 4px solid #4a4a40; border-top: 0; }
.vgap { height: 204px; }
.vthumb { height: 11px; background: #e4e0c6; }
.vdown { height: 11px; background: #ece9d8; }

.cursor { position: absolute; left: 507px; top: 348px; width: 10px; height: 15px; }
.caption {
  position: absolute; left: 70px; top: 521px; width: 1110px; margin: 0;
  font-family: "DejaVu Sans", Verdana, sans-serif; font-size: 35px; line-height: 45px; color: #111;
}
.taskbar { height: 17px; flex: none; background: #e9e5d6; display: flex; align-items: flex-end; padding: 0 0 0 2px; border-bottom: 1px solid #f5f3e8; }
.task { width: 113px; height: 14px; background: #b1c7dd; display: flex; align-items: center; padding-left: 2px; font-size: 7.2px; color: #2c3f52; white-space: nowrap; }
.task .wintitleicon { margin-right: 2px; }
.statusbar { height: 14px; flex: none; background: #e9e5d6; display: flex; align-items: center; padding: 0 2px; font-size: 7.4px; color: #333; border-bottom: 1px solid #7f7f72; }
.hint { flex: 1; }
.ind { width: 22px; text-align: center; color: #777; border-left: 1px solid #cfcbb6; }
.ind:last-child { color: #444; }
```
